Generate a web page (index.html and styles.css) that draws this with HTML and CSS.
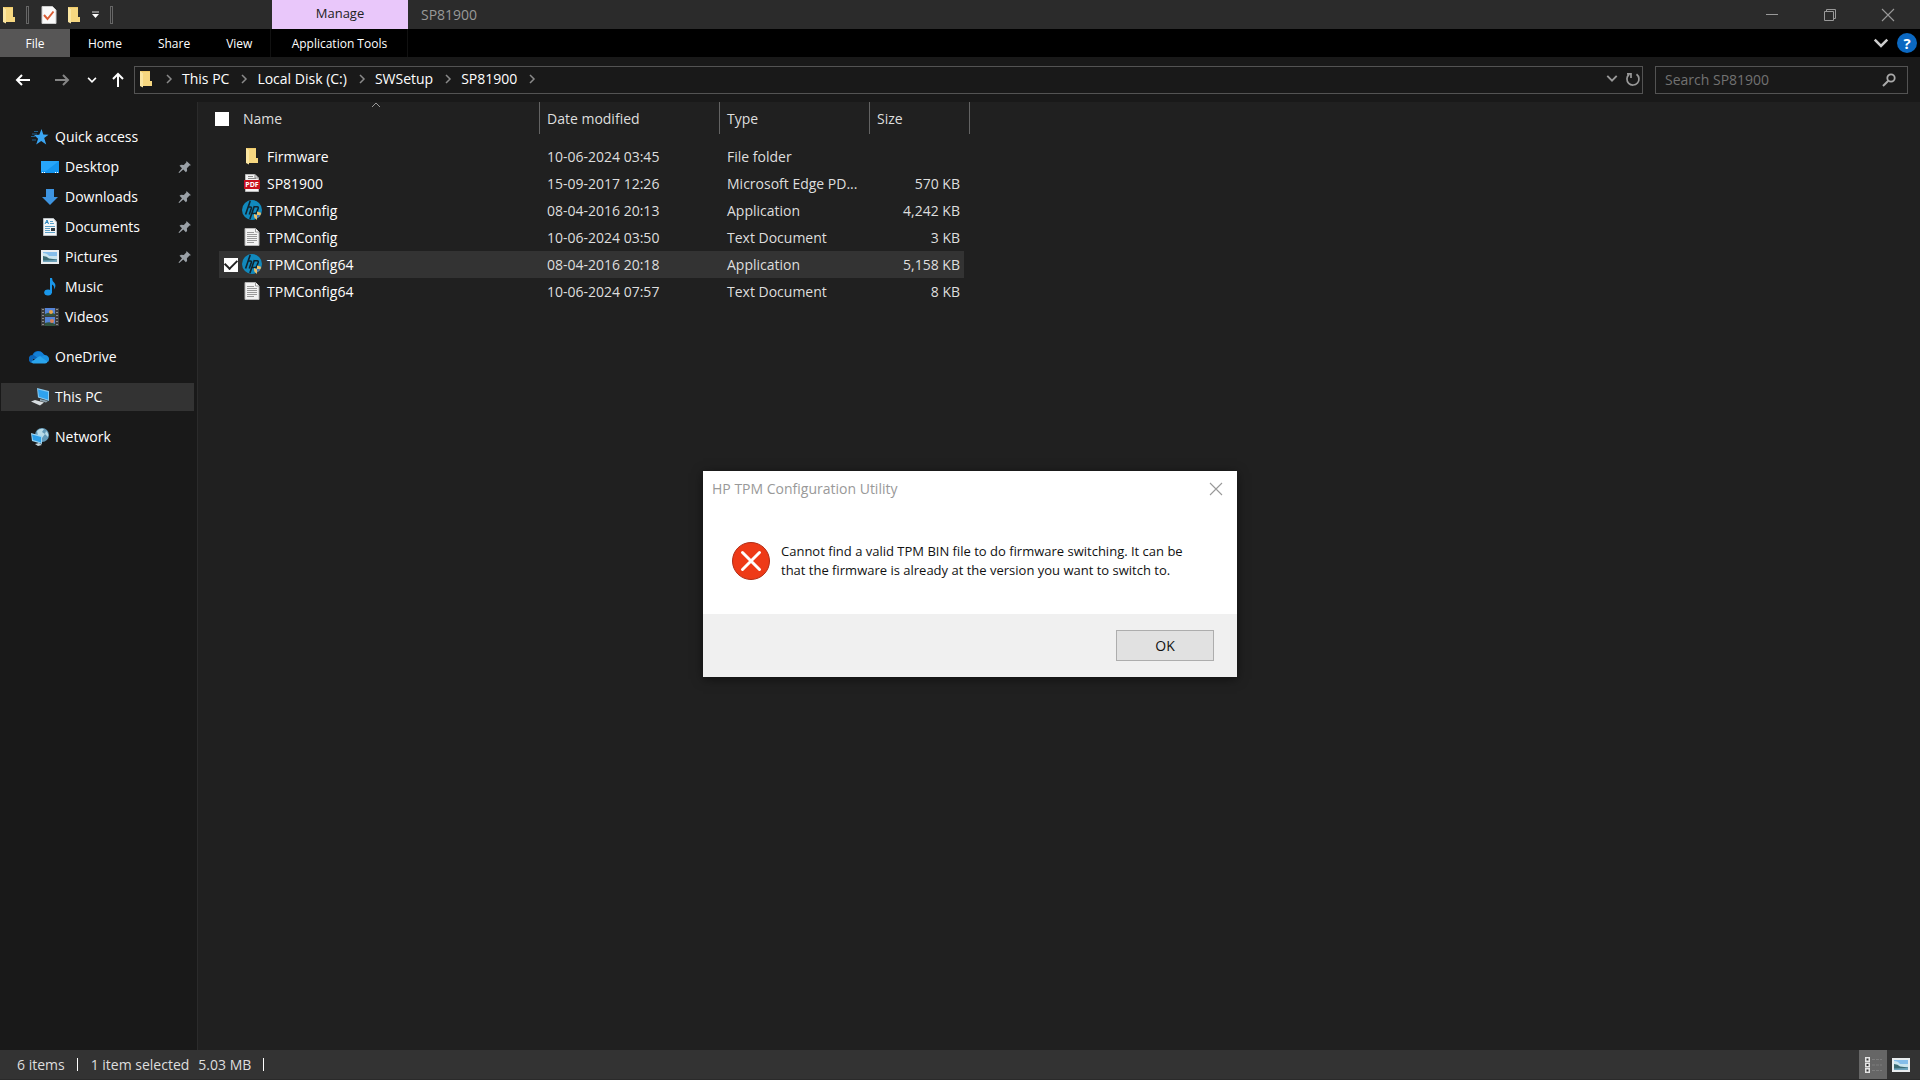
FILE: index.html
```html
<!DOCTYPE html>
<html lang="en">

<head>
	<meta charset="UTF-8">
	<meta name="viewport" content="width=device-width, initial-scale=1.0">
	<title>SP81900</title>
	<link rel="stylesheet" href="styles.css">
</head>

<body>
	<!-- shared icons -->
	<svg class="defs" aria-hidden="true">
		<symbol id="folder" viewBox="0 0 14 18">
			<path d="M1 1h10v10h2v5H3z" fill="#f0cb69" />
			<path d="M1 1l3 2v14.500L1 16z" fill="#fbe6a2" />
			<path d="M4 2h7v9h2v5H4z" fill="#f6d780" />
		</symbol>
		<symbol id="chev-r" viewBox="0 0 8 10">
			<path d="M2 1l4 4-4 4" fill="none" stroke="#8a8a8a" stroke-width="1.500" />
		</symbol>
		<symbol id="chev-d" viewBox="0 0 14 10">
			<path d="M1.500 2l5.500 5.500L12.500 2" fill="none" stroke="currentColor" stroke-width="2.200" />
		</symbol>
		<symbol id="cross" viewBox="0 0 14 14">
			<path d="M1 1l12 12M13 1L1 13" fill="none" stroke="currentColor" stroke-width="1.100" />
		</symbol>
		<symbol id="pin" viewBox="0 0 14 14">
			<path d="M8.500 1L13 5.200l-1.500.4-2.600 2.700.2 2.700-1.300 1.200-2.500-2.600L1.200 13l-.7-.6 3.500-4.200L1.500 5.800 3 4.800l2.800.1L8.300 2.500z" fill="#9aa0a6" />
		</symbol>
		<symbol id="txt" viewBox="0 0 16 18">
			<path d="M1 .5h10.500L15 4v13.500H1z" fill="#f3f3f3" stroke="#b5b5b5" />
			<path d="M11.500.5V4H15" fill="#fff" stroke="#9b9b9b" />
			<path d="M3 4.500h7M3 6.500h10M3 8.500h10M3 10.500h10M3 12.500h10M3 14.500h7" stroke="#999" />
		</symbol>
		<symbol id="hp" viewBox="0 0 20 20">
			<circle cx="10" cy="10" r="10" fill="#1189bd" />
			<path d="M8.200 1L3.600 14.500M5.800 7h2.600q1.400 0 .9 1.600L7.300 14.500M12.400 6L7.900 19M12 6.800h3.200q1.400 0 .9 1.600l-1.300 3.800q-.4 1.300-1.800 1.300h-2.600" fill="none" stroke="#10232e" stroke-width="1.600" />
			<path d="M12 14l3 1.200V20q-3-2-3-4zM15 11.500l4 1.200q0 3.500-4 5z" fill="#eec06a" />
			<path d="M15 15h3q-.5 2-3 3z" fill="#3d73b9" />
		</symbol>
		<symbol id="photo" viewBox="0 0 18 14">
			<path d="M0 0h18v14H0z" fill="#e9edef" />
			<path d="M2 2h14v10H2z" fill="#85bde9" />
			<path d="M2 3q4 0 6 3h8v3H2z" fill="#c9e4ee" />
			<path d="M2 6q4 0 6 2.500l8 1V12H2z" fill="#3b6a72" />
			<path d="M2 10.500l14-.5v2H2z" fill="#6ea3bb" />
		</symbol>
	</svg>

	<header class="titlebar">
		<div class="quick">
			<svg class="folder"><use href="#folder" /></svg>
			<span class="grip"></span>
			<button class="quick-btn" aria-label="Properties">
				<svg width="16" height="18" viewBox="0 0 16 18">
					<path d="M1 .5h10.500L15 4v13.500H1z" fill="#fafafa" stroke="#ccc" />
					<path d="M3 9l3.500 4L12.500 5.500" fill="none" stroke="#d95c34" stroke-width="2" />
				</svg>
			</button>
			<button class="quick-btn" aria-label="New folder"><svg class="folder"><use href="#folder" /></svg></button>
			<button class="quick-btn" aria-label="Customize">
				<svg width="9" height="8" viewBox="0 0 9 8"><path d="M1 1h7" stroke="#ddd" /><path d="M1 3h7L4.500 7z" fill="#fff" /></svg>
			</button>
			<span class="grip"></span>
		</div>
		<div class="manage">Manage</div>
		<h1 class="title">SP81900</h1>
		<div class="controls">
			<button aria-label="Minimize"><svg width="14" height="14" viewBox="0 0 14 14"><path d="M1 6.500h12" stroke="#999" /></svg></button>
			<button aria-label="Restore"><svg width="14" height="14" viewBox="0 0 14 14"><path d="M1.500 3.500h9v9h-9zM3.500 3V1.500h9v9H11" fill="none" stroke="#999" /></svg></button>
			<button aria-label="Close"><svg width="14" height="14"><use href="#cross" /></svg></button>
		</div>
	</header>

	<nav class="tabs">
		<button class="file">File</button>
		<button>Home</button>
		<button>Share</button>
		<button>View</button>
		<button class="tools">Application Tools</button>
		<button class="expand" aria-label="Expand ribbon"><svg width="16" height="12"><use href="#chev-d" /></svg></button>
		<button class="help" aria-label="Help">?</button>
	</nav>

	<div class="navbar">
		<div class="arrows">
			<button aria-label="Back"><svg width="16" height="12" viewBox="0 0 16 12"><path d="M15 6H2M7 1L2 6l5 5" fill="none" stroke="#fff" stroke-width="2" /></svg></button>
			<button aria-label="Forward"><svg width="16" height="12" viewBox="0 0 16 12"><path d="M1 6h13M9 1l5 5-5 5" fill="none" stroke="#858585" stroke-width="2" /></svg></button>
			<button class="recent" aria-label="Recent locations"><svg width="10" height="8"><use href="#chev-d" /></svg></button>
			<button class="up" aria-label="Up"><svg width="12" height="16" viewBox="0 0 12 16"><path d="M6 15V2M1 7l5-5 5 5" fill="none" stroke="#fff" stroke-width="2" /></svg></button>
		</div>
		<div class="address">
			<svg class="folder"><use href="#folder" /></svg>
			<svg class="sep"><use href="#chev-r" /></svg>
			<a href="#">This PC</a>
			<svg class="sep"><use href="#chev-r" /></svg>
			<a href="#">Local Disk (C:)</a>
			<svg class="sep"><use href="#chev-r" /></svg>
			<a href="#">SWSetup</a>
			<svg class="sep"><use href="#chev-r" /></svg>
			<a href="#">SP81900</a>
			<svg class="sep"><use href="#chev-r" /></svg>
			<button class="drop" aria-label="Previous locations"><svg width="12" height="9"><use href="#chev-d" /></svg></button>
			<button aria-label="Refresh"><svg width="16" height="16" viewBox="0 0 16 16"><path d="M11.500 3.200A6 6 0 1 1 4 3.500M2 2.800h4V7" fill="none" stroke="#999" stroke-width="1.700" /></svg></button>
		</div>
		<div class="search">
			<input type="text" placeholder="Search SP81900" aria-label="Search SP81900">
			<svg width="14" height="14" viewBox="0 0 14 14"><circle cx="9" cy="5" r="3.700" fill="none" stroke="#aaa" stroke-width="1.800" /><path d="M6.300 7.700L1 13" stroke="#aaa" stroke-width="2" /></svg>
		</div>
	</div>

	<main class="content">
		<aside class="sidebar">
			<ul>
				<li><a href="#">
					<svg class="ico" viewBox="0 0 18 18"><path d="M10.500 1l1.800 5.600 5.200.1-4.300 3.400 2 6.400-5-3.600-5 3.700 1.900-5.900L3 7l5.300-.2z" fill="#3aa5f2" /><path d="M3 3.500h4M1 6h5M0 8.500h4M1 12h4" stroke="#20618f" /></svg>
					Quick access</a></li>
				<li class="sub"><a href="#">
					<svg class="ico" viewBox="0 0 18 18"><path d="M0 3h18v12H0z" fill="#1496f0" /><path d="M0 3h18L5 13H0z" fill="#27a6fa" /><path d="M1 14.500h1M3 14.500h1M14 14.500h1M16 14.500h1" stroke="#fff" /></svg>
					Desktop</a><svg class="pin"><use href="#pin" /></svg></li>
				<li class="sub"><a href="#">
					<svg class="ico" viewBox="0 0 18 18"><path d="M5 1h8v8h4l-8 8-8-8h4z" fill="#3e94e0" /></svg>
					Downloads</a><svg class="pin"><use href="#pin" /></svg></li>
				<li class="sub"><a href="#">
					<svg class="ico" viewBox="0 0 18 18"><path d="M2.500.5h10L15.500 4v13.500h-13z" fill="#f4f6f7" stroke="#b9bfc4" /><path d="M4 6l2-4 1.500 4M5 4.500h2" fill="none" stroke="#2583bd" /><path d="M9 3.500h3M9 5.500h4M4 8.500h10M4 10.500h5M4 12.500h5M4 14.500h10" stroke="#5aa0c8" /><path d="M10 10h4v3h-4z" fill="#303a42" /></svg>
					Documents</a><svg class="pin"><use href="#pin" /></svg></li>
				<li class="sub"><a href="#">
					<svg class="ico"><use href="#photo" /></svg>
					Pictures</a><svg class="pin"><use href="#pin" /></svg></li>
				<li class="sub"><a href="#">
					<svg class="ico" viewBox="0 0 18 18"><ellipse cx="7" cy="14.500" rx="3.800" ry="3" fill="#1a97ea" /><path d="M9 0h2q0 3 2.500 5 2 2.500-.3 6.500Q13.500 7.500 11 6.500V15H9z" fill="#1a97ea" /></svg>
					Music</a></li>
				<li class="sub"><a href="#">
					<svg class="ico" viewBox="0 0 18 18"><path d="M0 0h18v18H0z" fill="#3c3c3c" /><path d="M4 0h10v8H4zM4 9h10v9H4z" fill="#5584d6" /><path d="M4 6q5-3 10 0v2H4zM4 15q5-2 10 1v2H4z" fill="#31543f" /><circle cx="10" cy="4" r="2" fill="#e9a64b" /><circle cx="11" cy="13" r="2" fill="#d78158" /><path d="M2 1v17M16 1v17" stroke="#8c8c8c" stroke-width="2" stroke-dasharray="1 2" /></svg>
					Videos</a></li>
			</ul>
			<ul>
				<li><a href="#">
					<svg class="ico cloud" viewBox="0 0 20 14"><path d="M4 13A4 4 0 0 1 3.500 5 6 6 0 0 1 14 3.500Q17 5 17 9H4z" fill="#0b64b8" /><path d="M7 2A6 6 0 0 1 15 5l-5 4-6-4.500z" fill="#1480d6" /><path d="M2 12l7-5q2-1.500 4 0l6 4q-1 2.500-3 2.500H4z" fill="#2aa4ec" /><path d="M15 5a4.300 4.300 0 0 1 4 7l-7-5z" fill="#1b91e0" /></svg>
					OneDrive</a></li>
			</ul>
			<ul>
				<li class="active"><a href="#">
					<svg class="ico" viewBox="0 0 18 18"><path d="M6 0l12 3v10L7 9.500z" fill="#8bc9ee" /><path d="M7 1.500L17 4v7.500L8 8.700z" fill="#2fa2ee" /><path d="M9 11l8 2-2 1.500-6-1.500z" fill="#8ba1ad" /><path d="M0 13.500l4-1.500 9 2.500-4 3z" fill="#d8dde0" /></svg>
					This PC</a></li>
			</ul>
			<ul>
				<li><a href="#">
					<svg class="ico" viewBox="0 0 18 18"><circle cx="11" cy="7" r="7" fill="#6299b8" /><path d="M6 3q3-3 7-2l-2 3 3 2-3 4-4-2zM15 3q3 2 2 6l-3-3z" fill="#b8dbe8" /><path d="M0 5l11 3v8L1 13z" fill="#9dd5f2" /><path d="M1 6.500L10 9v5.500L2 12z" fill="#2c9fe8" /><path d="M4 16l4-1 3 2-4 1z" fill="#c5d5dd" /></svg>
					Network</a></li>
			</ul>
		</aside>

		<section class="files">
			<table>
				<colgroup>
					<col class="c-check">
					<col class="c-name">
					<col class="c-date">
					<col class="c-type">
					<col class="c-size">
				</colgroup>
				<thead>
					<tr>
						<th class="pick"><div><input type="checkbox" aria-label="Select all"></div></th>
						<th><div>Name<svg class="sort" viewBox="0 0 10 6"><path d="M1 5l4-4 4 4" fill="none" stroke="#999" /></svg></div></th>
						<th><div class="line">Date modified</div></th>
						<th><div class="line">Type</div></th>
						<th><div class="line last">Size</div></th>
					</tr>
				</thead>
				<tbody>
					<tr>
						<td></td>
						<td><span class="name"><span class="fi"><svg class="folder"><use href="#folder" /></svg></span>Firmware</span></td>
						<td>10-06-2024 03:45</td>
						<td>File folder</td>
						<td></td>
					</tr>
					<tr>
						<td></td>
						<td><span class="name"><span class="fi"><svg width="16" height="18" viewBox="0 0 16 18"><path d="M1.500.5H11L14.500 4v13.500h-13z" fill="#f4f4f4" stroke="#bbb" /><path d="M4 2.500h5M4 4.500h8M11 .5V4h3.500" fill="none" stroke="#888" /><path d="M0 6h16v9H0z" fill="#c8101c" /><text x="8" y="13" class="pdf">PDF</text></svg></span>SP81900</span></td>
						<td>15-09-2017 12:26</td>
						<td>Microsoft Edge PD...</td>
						<td>570 KB</td>
					</tr>
					<tr>
						<td></td>
						<td><span class="name"><span class="fi"><svg width="20" height="20"><use href="#hp" /></svg></span>TPMConfig</span></td>
						<td>08-04-2016 20:13</td>
						<td>Application</td>
						<td>4,242 KB</td>
					</tr>
					<tr>
						<td></td>
						<td><span class="name"><span class="fi"><svg width="16" height="18"><use href="#txt" /></svg></span>TPMConfig</span></td>
						<td>10-06-2024 03:50</td>
						<td>Text Document</td>
						<td>3 KB</td>
					</tr>
					<tr class="selected">
						<td><input type="checkbox" aria-label="Select TPMConfig64" checked></td>
						<td><span class="name"><span class="fi"><svg width="20" height="20"><use href="#hp" /></svg></span>TPMConfig64</span></td>
						<td>08-04-2016 20:18</td>
						<td>Application</td>
						<td>5,158 KB</td>
					</tr>
					<tr>
						<td></td>
						<td><span class="name"><span class="fi"><svg width="16" height="18"><use href="#txt" /></svg></span>TPMConfig64</span></td>
						<td>10-06-2024 07:57</td>
						<td>Text Document</td>
						<td>8 KB</td>
					</tr>
				</tbody>
			</table>
		</section>
	</main>

	<footer class="status">
		<span class="count">6 items</span>
		<span class="count"><span>1 item selected</span><span>5.03 MB</span></span>
		<div class="views">
			<button class="on" aria-label="Details view"><svg width="20" height="18" viewBox="0 0 20 18"><path d="M2 1h5v5H2zM2 6.500h5v5H2zM2 12h5v5H2z" fill="#e4e4e4" /><path d="M3.500 2.500h2v2h-2zM3.500 8h2v2h-2zM3.500 13.500h2v2h-2z" fill="#333" /><path d="M9 3.500h10M9 9h10M9 14.500h10" stroke="#7d7d7d" stroke-dasharray="3 1" /></svg></button>
			<button aria-label="Large icons"><svg width="18" height="14"><use href="#photo" /></svg></button>
		</div>
	</footer>

	<div class="dialog" role="alertdialog" aria-labelledby="dlg-title">
		<div class="dialog-head">
			<h2 id="dlg-title">HP TPM Configuration Utility</h2>
			<button aria-label="Close"><svg width="14" height="14"><use href="#cross" /></svg></button>
		</div>
		<div class="dialog-body">
			<svg width="38" height="38" viewBox="0 0 38 38"><circle cx="19" cy="19" r="18.500" fill="#ee3a17" stroke="#b12c16" /><path d="M10.500 10.500l17 17M27.500 10.500l-17 17" stroke="#fff" stroke-width="3" stroke-linecap="round" /></svg>
			<p>Cannot find a valid TPM BIN file to do firmware switching. It can be<br>that the firmware is already at the version you want to switch to.</p>
		</div>
		<div class="dialog-foot">
			<button>OK</button>
		</div>
	</div>
</body>

</html>
```
FILE: styles.css
```css
* {
	padding: 0;
	margin: 0;
	box-sizing: border-box;
	list-style: none;
}

body {
	display: flex;
	flex-direction: column;
	min-height: 100vh;
	background: #202020;
	color: #fff;
	font-family: "Open Sans", "Noto Sans", sans-serif;
	font-size: 14px;
	line-height: 20px;
}

a {
	color: inherit;
	text-decoration: none;
}

button {
	display: flex;
	align-items: center;
	justify-content: center;
	border: 0;
	background: none;
	color: inherit;
	font: inherit;
}

svg {
	flex: none;
}

.defs {
	position: absolute;
	width: 0;
	height: 0;
}

.folder {
	width: 14px;
	height: 18px;
}

/* title bar */
.titlebar {
	display: flex;
	height: 29px;
	background: #2b2b2b;
}

.quick {
	display: flex;
	align-items: center;
	gap: 10px;
	width: 272px;
	padding-left: 2px;
}

.grip {
	width: 3px;
	height: 18px;
	border: 1px solid #666;
}

.grip + .quick-btn {
	margin-left: 2px;
}

.manage {
	width: 136px;
	background: #e9c7fa;
	color: #222;
	font-size: 13px;
	line-height: 27px;
	text-align: center;
}

.title {
	padding-left: 13px;
	color: #999;
	font-size: 14px;
	font-weight: normal;
	line-height: 29px;
}

.controls {
	display: flex;
	margin-left: auto;
	padding-right: 3px;
	color: #999;
}

.controls button {
	width: 58px;
}

/* ribbon tabs */
.tabs {
	display: flex;
	height: 28px;
	background: #000;
	font-size: 12px;
}

.tabs button {
	padding: 1px 18px 0;
}

.tabs .file {
	width: 70px;
	background: #575656;
}

.tabs .tools {
	width: 138px;
	border: 1px solid #111;
	border-width: 0 1px;
}

.tabs .expand {
	width: 30px;
	margin-left: auto;
	padding: 0;
	color: #ccc;
}

.tabs .help {
	align-self: center;
	width: 20px;
	height: 20px;
	margin: 0 3px 0 1px;
	padding: 0;
	border-radius: 50%;
	background: #0b68c1;
	font-size: 15px;
	font-weight: bold;
}

/* address row */
.navbar {
	display: flex;
	align-items: center;
	height: 45px;
	padding-right: 12px;
	background: #191919;
}

.arrows {
	display: flex;
	align-items: center;
	width: 134px;
	padding-left: 15px;
}

.arrows button + button {
	margin-left: 23px;
}

.arrows .recent.recent {
	margin-left: 17px;
}

.arrows .up.up {
	margin-left: 15px;
}

.address {
	display: flex;
	flex: 1;
	align-items: center;
	height: 28px;
	padding: 0 1px 2px 4px;
	border: 1px solid #535353;
}

.sep {
	width: 8px;
	height: 10px;
	margin: 0 9px 0 11px;
}

.folder + .sep {
	margin-left: 12px;
}

.address .drop {
	margin: 0 7px 0 auto;
	color: #999;
}

.search {
	display: flex;
	align-items: center;
	width: 253px;
	height: 28px;
	margin-left: 12px;
	padding: 0 11px 0 9px;
	border: 1px solid #535353;
}

.search input {
	flex: 1;
	min-width: 0;
	border: 0;
	background: none;
	color: #fff;
	font: inherit;
}

.search input::placeholder {
	color: #727272;
}

/* navigation pane */
.content {
	display: flex;
	flex: 1;
}

.sidebar {
	width: 198px;
	padding: 21px 3px 0 1px;
	border-right: 1px solid #2b2b2b;
	background: #191919;
}

.sidebar ul {
	margin-bottom: 12px;
}

.sidebar li {
	display: flex;
	align-items: center;
	justify-content: space-between;
	height: 28px;
	padding-left: 30px;
}

.sidebar li + li {
	margin-top: 2px;
}

.sidebar .sub {
	padding-left: 40px;
}

.sidebar .active {
	background: #333;
}

.sidebar a {
	display: flex;
	align-items: center;
	gap: 6px;
}

.ico {
	width: 18px;
	height: 18px;
}

.sidebar .cloud {
	width: 20px;
	height: 14px;
	margin-left: -2px;
}

.pin {
	width: 14px;
	height: 14px;
	margin-right: 2px;
}

/* file list */
.files {
	flex: 1;
}

table {
	width: 772px;
	table-layout: fixed;
	border-spacing: 0;
	color: #dedede;
}

.c-check {
	width: 41px;
}

.c-name {
	width: 300px;
}

.c-date {
	width: 180px;
}

.c-type {
	width: 150px;
}

th {
	padding-bottom: 9px;
	font-weight: normal;
	text-align: left;
}

th div {
	display: flex;
	align-items: center;
	position: relative;
	height: 32px;
	padding-top: 2px;
	padding-left: 4px;
}

th.pick div {
	padding-left: 17px;
}

th .line {
	padding-left: 7px;
	border-left: 1px solid #636363;
}

th .last {
	border-right: 1px solid #636363;
}

.sort {
	position: absolute;
	top: 0;
	left: 132px;
	width: 10px;
	height: 6px;
}

td {
	height: 27px;
	padding-left: 8px;
	background-clip: padding-box;
	white-space: nowrap;
}

td:first-child {
	padding-left: 5px;
	border-left: 21px solid transparent;
}

td:nth-child(2) {
	padding-left: 3px;
	color: #fff;
}

td:last-child {
	padding-right: 4px;
	border-right: 6px solid transparent;
	text-align: right;
}

.selected td {
	background-color: #333;
}

.name {
	display: flex;
	align-items: center;
	gap: 5px;
}

.fi {
	display: flex;
	justify-content: center;
	width: 20px;
	padding-bottom: 2px;
}

.pdf {
	fill: #fff;
	font-size: 7px;
	font-weight: bold;
	text-anchor: middle;
}

input[type="checkbox"] {
	display: grid;
	place-items: center;
	width: 14px;
	height: 14px;
	appearance: none;
	background: #fff;
}

input[type="checkbox"]:checked::before {
	content: "";
	width: 10px;
	height: 6px;
	margin-bottom: 3px;
	border: solid #222;
	border-width: 0 0 2px 2px;
	transform: rotate(-45deg);
}

/* status bar */
.status {
	display: flex;
	align-items: center;
	height: 30px;
	padding-left: 17px;
	border-bottom: 1px solid #2a2a2a;
	background: #333;
	color: #dedede;
}

.count {
	display: flex;
	align-items: center;
	margin-right: 13px;
}

.count span + span {
	margin-left: 9px;
}

.count::after {
	content: "";
	width: 1px;
	height: 13px;
	margin-left: 12px;
	background: #fff;
}

.views {
	display: flex;
	align-self: stretch;
	margin-left: auto;
	padding-right: 5px;
}

.views button {
	width: 28px;
}

.views .on {
	background: #666;
}

/* message box */
.dialog {
	position: absolute;
	top: 471px;
	left: 703px;
	width: 534px;
	background: #fff;
	color: #111;
	box-shadow: 0 2px 10px rgba(0, 0, 0, 0.5);
}

.dialog-head {
	display: flex;
	align-items: center;
	justify-content: space-between;
	height: 36px;
	padding: 0 14px 0 9px;
	color: #999;
}

.dialog-head h2 {
	font-size: 14px;
	font-weight: normal;
}

.dialog-body {
	display: flex;
	align-items: center;
	gap: 11px;
	padding: 35px 29px 34px;
	font-size: 13px;
	line-height: 19px;
	white-space: nowrap;
}

.dialog-foot {
	display: flex;
	justify-content: flex-end;
	padding: 16px 23px;
	background: #f0f0f0;
}

.dialog-foot button {
	width: 98px;
	height: 31px;
	border: 1px solid #adadad;
	background: #e1e1e1;
	font-size: 14px;
}
```
